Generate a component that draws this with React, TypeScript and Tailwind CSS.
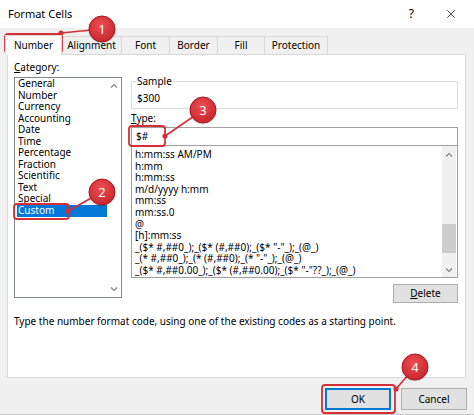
import { X } from "lucide-react";

const tabs = [
  { label: "Number", w: "w-[57px]" },
  { label: "Alignment", w: "w-[60px]" },
  { label: "Font", w: "w-[48px]" },
  { label: "Border", w: "w-[48px]" },
  { label: "Fill", w: "w-[47px]" },
  { label: "Protection", w: "w-[63px]" },
];

const categories = [
  "General",
  "Number",
  "Currency",
  "Accounting",
  "Date",
  "Time",
  "Percentage",
  "Fraction",
  "Scientific",
  "Text",
  "Special",
  "Custom",
];

const formats = [
  "h:mm:ss AM/PM",
  "h:mm",
  "h:mm:ss",
  "m/d/yyyy h:mm",
  "mm:ss",
  "mm:ss.0",
  "@",
  "[h]:mm:ss",
  '_($* #,##0_);_($* (#,##0);_($* "-"_);_(@_)',
  '_(* #,##0_);_(* (#,##0);_(* "-"_);_(@_)',
  '_($* #,##0.00_);_($* (#,##0.00);_($* "-"??_);_(@_)',
];

function Chevron({ up }: { up?: boolean }) {
  return (
    <svg width="8" height="5" viewBox="0 0 8 5" className="block">
      <polyline
        points={up ? "1,4.5 4,1.5 7,4.5" : "1,0.5 4,3.5 7,0.5"}
        fill="none"
        stroke="#858585"
        strokeWidth="1.2"
      />
    </svg>
  );
}

// red numbered callouts drawn over the dialog
const callouts = [
  { n: 1, cx: 102, cy: 29, dx: 61, dy: 33, r: { x: 5, y: 34, w: 57, h: 19 } },
  { n: 2, cx: 102, cy: 192, dx: 68, dy: 211, r: { x: 14, y: 204, w: 55, h: 15 } },
  { n: 3, cx: 203, cy: 110, dx: 165, dy: 136, r: { x: 129, y: 126, w: 36, h: 20 } },
  { n: 4, cx: 415, cy: 367, dx: 396, dy: 389, r: { x: 322, y: 385, w: 73, h: 28 } },
];

function Callouts() {
  return (
    <svg className="absolute inset-0 pointer-events-none" width="474" height="415">
      <defs>
        <radialGradient id="rg" cx="45%" cy="35%" r="70%">
          <stop offset="0%" stopColor="#ee4d52" />
          <stop offset="100%" stopColor="#c4242b" />
        </radialGradient>
      </defs>
      {callouts.map(c => (
        <g key={c.n}>
          <rect x={c.r.x} y={c.r.y} width={c.r.w} height={c.r.h} rx="3" fill="none" stroke="#d42f36" strokeWidth="1.8" />
          <line x1={c.dx} y1={c.dy} x2={c.cx} y2={c.cy} stroke="#d42f36" strokeWidth="1.6" />
          <circle cx={c.dx} cy={c.dy} r="2.6" fill="#d42f36" />
          <circle cx={c.cx} cy={c.cy + 1} r="13.5" fill="#000" opacity="0.12" />
          <circle cx={c.cx} cy={c.cy} r="13" fill="url(#rg)" stroke="#a9191f" strokeWidth="1" />
          <text
            x={c.cx}
            y={c.cy + 4.5}
            textAnchor="middle"
            fontSize="13"
            fontFamily="'Noto Sans', sans-serif"
            fill="#fff"
          >
            {c.n}
          </text>
        </g>
      ))}
    </svg>
  );
}

export default function App() {
  return (
    <div className="relative w-[474px] h-[415px] bg-[#f0f0f0] overflow-hidden flex flex-col text-[10px] text-black font-['Noto_Sans',sans-serif] border-b border-[#c8c8c8]">
      {/* title bar */}
      <div className="h-[28px] bg-white flex items-center pl-[8px] shrink-0">
        <span className="text-[11px]">Format Cells</span>
        <span className="ml-auto text-[12px] mr-[30px]">?</span>
        <X size={14} strokeWidth={1.2} className="mr-[16px]" />
      </div>

      {/* tabs */}
      <div className="flex items-end pl-[5px] mt-[6px] h-[20px] shrink-0">
        {tabs.map((t, i) => (
          <div
            key={t.label}
            className={
              i === 0
                ? `${t.w} h-[20px] bg-white border border-b-0 border-[#d9d9d9] flex items-center justify-center -mb-px relative z-10`
                : `${t.w} h-[18px] border border-l-0 border-b-0 border-[#d9d9d9] flex items-center justify-center`
            }
          >
            {t.label}
          </div>
        ))}
      </div>

      {/* panel */}
      <div className="mx-[7px] w-[459px] h-[324px] bg-white border border-[#d9d9d9] shrink-0 flex flex-col">
        <div className="flex pl-[6px]">
          {/* category column */}
          <div className="w-[108px] pt-[6px]">
            <div className="leading-[12px] mb-[4px]">
              <span className="underline">C</span>ategory:
            </div>
            <div className="h-[221px] border border-[#828790] flex">
              <div className="flex-1 pl-[2px] pt-[0px]">
                {categories.map(c => (
                  <div
                    key={c}
                    className={
                      c === "Custom"
                        ? "leading-[11.55px] h-[11.55px] bg-[#0078d7] text-white pl-[1px]"
                        : "leading-[11.55px] h-[11.55px] pl-[1px]"
                    }
                  >
                    {c}
                  </div>
                ))}
              </div>
              <div className="w-[14px] flex flex-col items-center justify-between py-[5px]">
                <Chevron up />
                <Chevron />
              </div>
            </div>
          </div>

          {/* right column */}
          <div className="w-[327px] ml-[9px] flex flex-col">
            <div className="relative mt-[26px] h-[28px] border border-[#dcdcdc] pl-[5px] pt-[10px] leading-[12px]">
              <span className="absolute -top-[7px] left-[4px] bg-white px-[1px] leading-[12px]">Sample</span>
              $300
            </div>
            <div className="leading-[12px] mt-[3px] mb-[3px]">
              <span className="underline">T</span>ype:
            </div>
            <div className="h-[19px] border border-[#a0a0a0] pl-[4px] flex items-center">$#</div>
            <div className="h-[132px] border border-t-0 border-[#a0a0a0] flex">
              <div className="flex-1 pl-[3px] pt-[3px] overflow-hidden whitespace-nowrap">
                {formats.map(f => (
                  <div key={f} className="leading-[11.6px] h-[11.6px]">
                    {f}
                  </div>
                ))}
              </div>
              <div className="w-[14px] mr-[1px] bg-[#f0f0f0] flex flex-col items-center pt-[6px] pb-[4px]">
                <Chevron up />
                <div className="w-[14px] h-[29px] bg-[#cdcdcd] mt-[67px]" />
                <div className="mt-auto">
                  <Chevron />
                </div>
              </div>
            </div>
            <div className="self-end mt-[6px] w-[65px] h-[19px] bg-[#e1e1e1] border border-[#adadad] flex items-center justify-center">
              <span>
                <span className="underline">D</span>elete
              </span>
            </div>
          </div>
        </div>
        <div className="pl-[6px] mt-[12px] leading-[12px]">
          Type the number format code, using one of the existing codes as a starting point.
        </div>
      </div>

      {/* buttons */}
      <div className="flex justify-end gap-[10px] pr-[7px] mt-[10px]">
        <div className="w-[66px] h-[22px] bg-[#e1e1e1] border-2 border-[#0078d7] flex items-center justify-center">OK</div>
        <div className="w-[66px] h-[22px] bg-[#e1e1e1] border border-[#adadad] flex items-center justify-center">Cancel</div>
      </div>

      <Callouts />
    </div>
  );
}
